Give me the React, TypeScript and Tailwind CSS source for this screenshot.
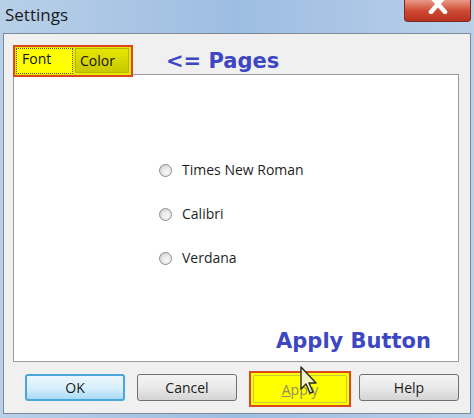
import React from "react";

const ui = { fontFamily: '"Open Sans", "Noto Sans", sans-serif' };
const big = { fontFamily: '"DejaVu Sans", Verdana, sans-serif' };

function Radio({ label }: { label: string }) {
  return (
    <div className="flex items-center h-[18px]">
      <div className="w-[13px] h-[13px] rounded-full border border-[#8c8c8c] bg-gradient-to-br from-[#cfcfcf] to-[#f7f7f7] flex items-center justify-center">
        <div className="w-[7px] h-[7px] rounded-full bg-gradient-to-br from-[#e2e2e2] to-[#fbfbfb]" />
      </div>
      <span className="ml-[10px] text-[14px] text-[#1e1e1e] leading-none" style={ui}>
        {label}
      </span>
    </div>
  );
}

function Btn({ children, ok }: { children: React.ReactNode; ok?: boolean }) {
  return (
    <div
      className={
        ok
          ? "w-[100px] h-[27px] rounded-[3px] border-2 border-[#4aa6da] bg-gradient-to-b from-[#eaf6fd] via-[#d9f0fc] to-[#a9dbf6] flex items-center justify-center text-[14px] text-[#1a1a1a]"
          : "w-[100px] h-[27px] rounded-[3px] border border-[#707070] bg-gradient-to-b from-[#f4f4f4] via-[#e9e9e9] to-[#d4d4d4] flex items-center justify-center text-[14px] text-[#1a1a1a]"
      }
      style={ui}
    >
      {children}
    </div>
  );
}

export default function App() {
  return (
    <div className="relative w-[474px] h-[418px] overflow-hidden flex flex-col bg-gradient-to-r from-[#b8cfe8] via-[#9dbde2] to-[#bad0e9]">
      {/* title bar */}
      <div className="h-[33px] flex items-start justify-between shrink-0">
        <span className="ml-[5px] mt-[4px] text-[17px] text-[#1b1b1b] leading-[22px]" style={ui}>
          Settings
        </span>
        <div className="mr-[3px] w-[67px] h-[22px] rounded-b-[4px] border border-t-0 border-[#7a2a20] bg-gradient-to-b from-[#e89a88] via-[#cf4a33] to-[#b8321f] flex items-start justify-center overflow-hidden">
          <svg width="20" height="14" viewBox="0 0 20 14">
            <path d="M3 -4 L17 12 M17 -4 L3 12" stroke="#ffffff" strokeWidth="4.5" strokeLinecap="round" />
          </svg>
        </div>
      </div>

      {/* dialog body */}
      <div className="mx-[3px] h-[381px] border border-[#7d8a98] bg-[#f0f0f0] flex flex-col pl-[9px] pr-[11px] pt-[11px]">
        {/* tabs row */}
        <div className="relative z-10 flex items-start h-[29px]">
          <div className="w-[120px] h-[32px] border-2 border-[#d9481f] bg-[#e8e800] flex items-stretch p-[1px]">
            <div className="w-[57px] bg-[#ffff00] border border-dotted border-[#555] flex items-start">
              <span className="ml-[5px] mt-[1px] text-[14px] leading-[18px] text-[#111]" style={ui}>
                Font
              </span>
            </div>
            <div className="ml-[2px] w-[54px] mb-[1px] bg-gradient-to-b from-[#e6e600] to-[#c9c900] border border-[#b5b500] flex items-end">
              <span className="ml-[4px] mb-[2px] text-[14px] leading-[18px] text-[#111]" style={ui}>
                Color
              </span>
            </div>
          </div>
          <span className="ml-[33px] mt-[4px] text-[21px] font-bold leading-[24px] text-[#3d47c4]" style={big}>
            {"<= Pages"}
          </span>
        </div>

        {/* page panel */}
        <div className="w-[446px] h-[288px] border border-[#9a9a9a] bg-white flex flex-col">
          <div className="flex flex-col pl-[145px] pt-[86px] gap-[26px]">
            <Radio label="Times New Roman" />
            <Radio label="Calibri" />
            <Radio label="Verdana" />
          </div>
          <span className="mt-auto mb-[8px] self-end mr-[27px] text-[21px] font-bold leading-[24px] text-[#3d47c4]" style={big}>
            Apply Button
          </span>
        </div>

        {/* buttons */}
        <div className="flex items-start mt-[9px] pl-[12px]">
          <div className="mt-[3px]">
            <Btn ok>OK</Btn>
          </div>
          <div className="ml-[12px] mt-[3px]">
            <Btn>Cancel</Btn>
          </div>
          <div className="ml-[12px] w-[102px] h-[36px] border-2 border-[#d9481f] bg-[#ffff00] p-[2px]">
            <div className="w-full h-full border border-[#c8c840] rounded-[2px] flex items-center justify-center">
              <span className="text-[14px] text-[#8f8f5a]" style={ui}>
                <span className="underline">A</span>pply
              </span>
            </div>
          </div>
          <div className="ml-[8px] mt-[3px]">
            <Btn>Help</Btn>
          </div>
        </div>
      </div>

      {/* mouse cursor */}
      <svg
        className="absolute left-[300px] top-[366px]"
        width="20"
        height="30"
        viewBox="0 0 20 30"
      >
        <path
          d="M1 1 L1 23 L6 18 L10 27 L13 26 L9 17 L16 17 Z"
          fill="#f2f2c8"
          stroke="#2a2a1a"
          strokeWidth="1.4"
          strokeLinejoin="round"
        />
      </svg>
    </div>
  );
}
